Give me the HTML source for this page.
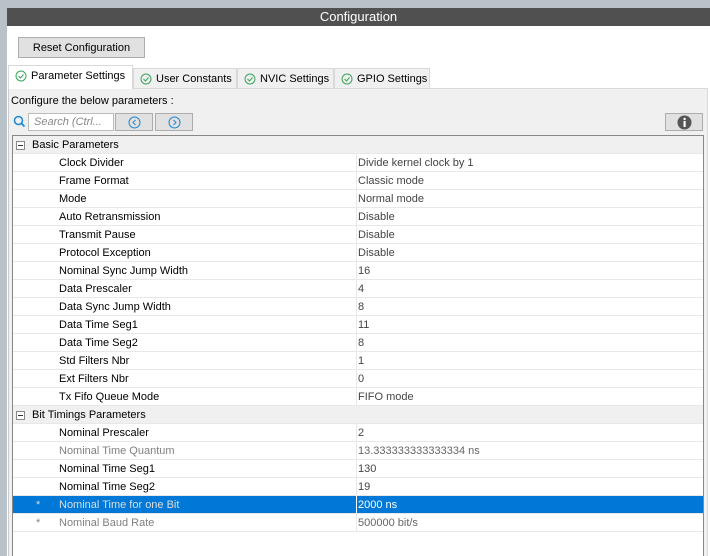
<!DOCTYPE html><html><head><style>
*{box-sizing:border-box;margin:0;padding:0}
body{width:710px;height:556px;overflow:hidden;background:#fff;font-family:"Liberation Sans",sans-serif;font-size:11px;color:#000;position:relative}
.abs{position:absolute}
.tab{position:absolute;top:68px;height:20px;border:1px solid #d9d9d9;border-bottom:none;background:#f0f0f0;padding:3px 0 0 6px;white-space:nowrap}
.tab svg{vertical-align:-3px;margin-right:4px}
.row{position:absolute;left:13px;width:690px;height:18px;border-bottom:1px solid #e8e8e8;background:#fff}
.row .n{position:absolute;left:46px;top:3px}
.row .v{position:absolute;left:345px;top:3px;color:#444}
.row .d{position:absolute;left:343px;top:0;height:18px;border-left:1px solid #e8e8e8}
.g{background:#f0f0f0}
.g .n{left:19px}
.box{position:absolute;left:3px;top:5px;width:9px;height:9px;border:1px solid #888;background:#fff}
.box:after{content:"";position:absolute;left:1px;top:3px;width:5px;height:1px;background:#333}
.gr{color:#808080}
.row .v.gr{color:#666}
.star{position:absolute;left:23px;top:3px;color:#808080}
</style></head><body>
<div class="abs" style="left:0;top:0;width:7px;height:556px;background:#b8c2c8"></div>
<div class="abs" style="left:0;top:0;width:710px;height:8px;background:#b8c2c8"></div>
<div class="abs" style="left:7px;top:8px;width:703px;height:18px;background:#505050;color:#fff;font-size:13px;text-align:center;padding-top:1px">Configuration</div>
<div class="abs" style="left:18px;top:37px;width:127px;height:21px;background:#e1e1e1;border:1px solid #adadad;text-align:center;padding-top:4px">Reset Configuration</div>
<div class="abs" style="left:8px;top:88px;width:700px;height:468px;background:#f0f0f0;border-left:1px solid #ccc;border-right:1px solid #d9d9d9;border-top:1px solid #d9d9d9"></div>
<div class="tab" style="left:8px;top:65px;width:125px;height:24px;background:#fff;padding-top:4px"><svg width="12" height="12"><circle cx="6" cy="6" r="5" fill="none" stroke="#3aa55a"/><path d="M3.5 6l2 2 3-3.5" fill="none" stroke="#3aa55a"/></svg>Parameter Settings</div>
<div class="tab" style="left:133px;width:104px;padding-top:4px"><svg width="12" height="12"><circle cx="6" cy="6" r="5" fill="none" stroke="#3aa55a"/><path d="M3.5 6l2 2 3-3.5" fill="none" stroke="#3aa55a"/></svg>User Constants</div>
<div class="tab" style="left:237px;width:97px;padding-top:4px"><svg width="12" height="12"><circle cx="6" cy="6" r="5" fill="none" stroke="#3aa55a"/><path d="M3.5 6l2 2 3-3.5" fill="none" stroke="#3aa55a"/></svg>NVIC Settings</div>
<div class="tab" style="left:334px;width:96px;padding-top:4px"><svg width="12" height="12"><circle cx="6" cy="6" r="5" fill="none" stroke="#3aa55a"/><path d="M3.5 6l2 2 3-3.5" fill="none" stroke="#3aa55a"/></svg>GPIO Settings</div>
<div class="abs" style="left:11px;top:95px">Configure the below parameters :</div>
<svg class="abs" style="left:13px;top:115px" width="13" height="13"><circle cx="5.5" cy="5.5" r="4" fill="none" stroke="#1e88d0" stroke-width="1.5"/><path d="M8.5 8.5l3 3" stroke="#1e88d0" stroke-width="1.8"/></svg>
<div class="abs" style="left:28px;top:113px;width:86px;height:18px;background:#fff;border:1px solid #bbb;color:#888;font-style:italic;padding:2px 0 0 5px">Search (Ctrl...</div>
<div class="abs" style="left:115px;top:113px;width:38px;height:18px;background:#e1e1e1;border:1px solid #adadad"><svg style="position:absolute;left:12px;top:2px" width="13" height="13"><circle cx="6.5" cy="6.5" r="5.5" fill="none" stroke="#1e88d0"/><path d="M7.5 4l-2.5 2.5 2.5 2.5" fill="none" stroke="#1e88d0"/></svg></div>
<div class="abs" style="left:155px;top:113px;width:38px;height:18px;background:#e1e1e1;border:1px solid #adadad"><svg style="position:absolute;left:12px;top:2px" width="13" height="13"><circle cx="6.5" cy="6.5" r="5.5" fill="none" stroke="#1e88d0"/><path d="M5.5 4l2.5 2.5-2.5 2.5" fill="none" stroke="#1e88d0"/></svg></div>
<div class="abs" style="left:665px;top:113px;width:38px;height:18px;background:#e1e1e1;border:1px solid #adadad"><svg style="position:absolute;left:11px;top:1px" width="15" height="15"><circle cx="7.5" cy="7.5" r="7" fill="#555"/><rect x="6.5" y="6" width="2.2" height="6" fill="#fff"/><circle cx="7.6" cy="4" r="1.2" fill="#fff"/></svg></div>
<div class="abs" style="left:12px;top:135px;width:692px;height:421px;background:#fff;border:1px solid #888;border-bottom:none"></div>

<div class="row g" style="top:136px"><div class="box"></div><span class="n">Basic Parameters</span></div>
<div class="row" style="top:154px"><span class="n">Clock Divider</span><div class="d"></div><span class="v">Divide kernel clock by 1</span></div>
<div class="row" style="top:172px"><span class="n">Frame Format</span><div class="d"></div><span class="v">Classic mode</span></div>
<div class="row" style="top:190px"><span class="n">Mode</span><div class="d"></div><span class="v">Normal mode</span></div>
<div class="row" style="top:208px"><span class="n">Auto Retransmission</span><div class="d"></div><span class="v">Disable</span></div>
<div class="row" style="top:226px"><span class="n">Transmit Pause</span><div class="d"></div><span class="v">Disable</span></div>
<div class="row" style="top:244px"><span class="n">Protocol Exception</span><div class="d"></div><span class="v">Disable</span></div>
<div class="row" style="top:262px"><span class="n">Nominal Sync Jump Width</span><div class="d"></div><span class="v">16</span></div>
<div class="row" style="top:280px"><span class="n">Data Prescaler</span><div class="d"></div><span class="v">4</span></div>
<div class="row" style="top:298px"><span class="n">Data Sync Jump Width</span><div class="d"></div><span class="v">8</span></div>
<div class="row" style="top:316px"><span class="n">Data Time Seg1</span><div class="d"></div><span class="v">11</span></div>
<div class="row" style="top:334px"><span class="n">Data Time Seg2</span><div class="d"></div><span class="v">8</span></div>
<div class="row" style="top:352px"><span class="n">Std Filters Nbr</span><div class="d"></div><span class="v">1</span></div>
<div class="row" style="top:370px"><span class="n">Ext Filters Nbr</span><div class="d"></div><span class="v">0</span></div>
<div class="row" style="top:388px"><span class="n">Tx Fifo Queue Mode</span><div class="d"></div><span class="v">FIFO mode</span></div>
<div class="row g" style="top:406px"><div class="box"></div><span class="n">Bit Timings Parameters</span></div>
<div class="row" style="top:424px"><span class="n">Nominal Prescaler</span><div class="d"></div><span class="v">2</span></div>
<div class="row" style="top:442px"><span class="n gr">Nominal Time Quantum</span><div class="d"></div><span class="v gr">13.333333333333334 ns</span></div>
<div class="row" style="top:460px"><span class="n">Nominal Time Seg1</span><div class="d"></div><span class="v">130</span></div>
<div class="row" style="top:478px"><span class="n">Nominal Time Seg2</span><div class="d"></div><span class="v">19</span></div>
<div class="row" style="top:496px;background:#0078d7;color:#fff"><span class="star" style="color:#ddd">*</span><span class="n" style="color:#ddd">Nominal Time for one Bit</span><div class="d" style="border-color:#fff"></div><span class="v" style="color:#fff">2000 ns</span></div>
<div class="row" style="top:514px"><span class="star">*</span><span class="n gr">Nominal Baud Rate</span><div class="d"></div><span class="v gr">500000 bit/s</span></div>
</body></html>
